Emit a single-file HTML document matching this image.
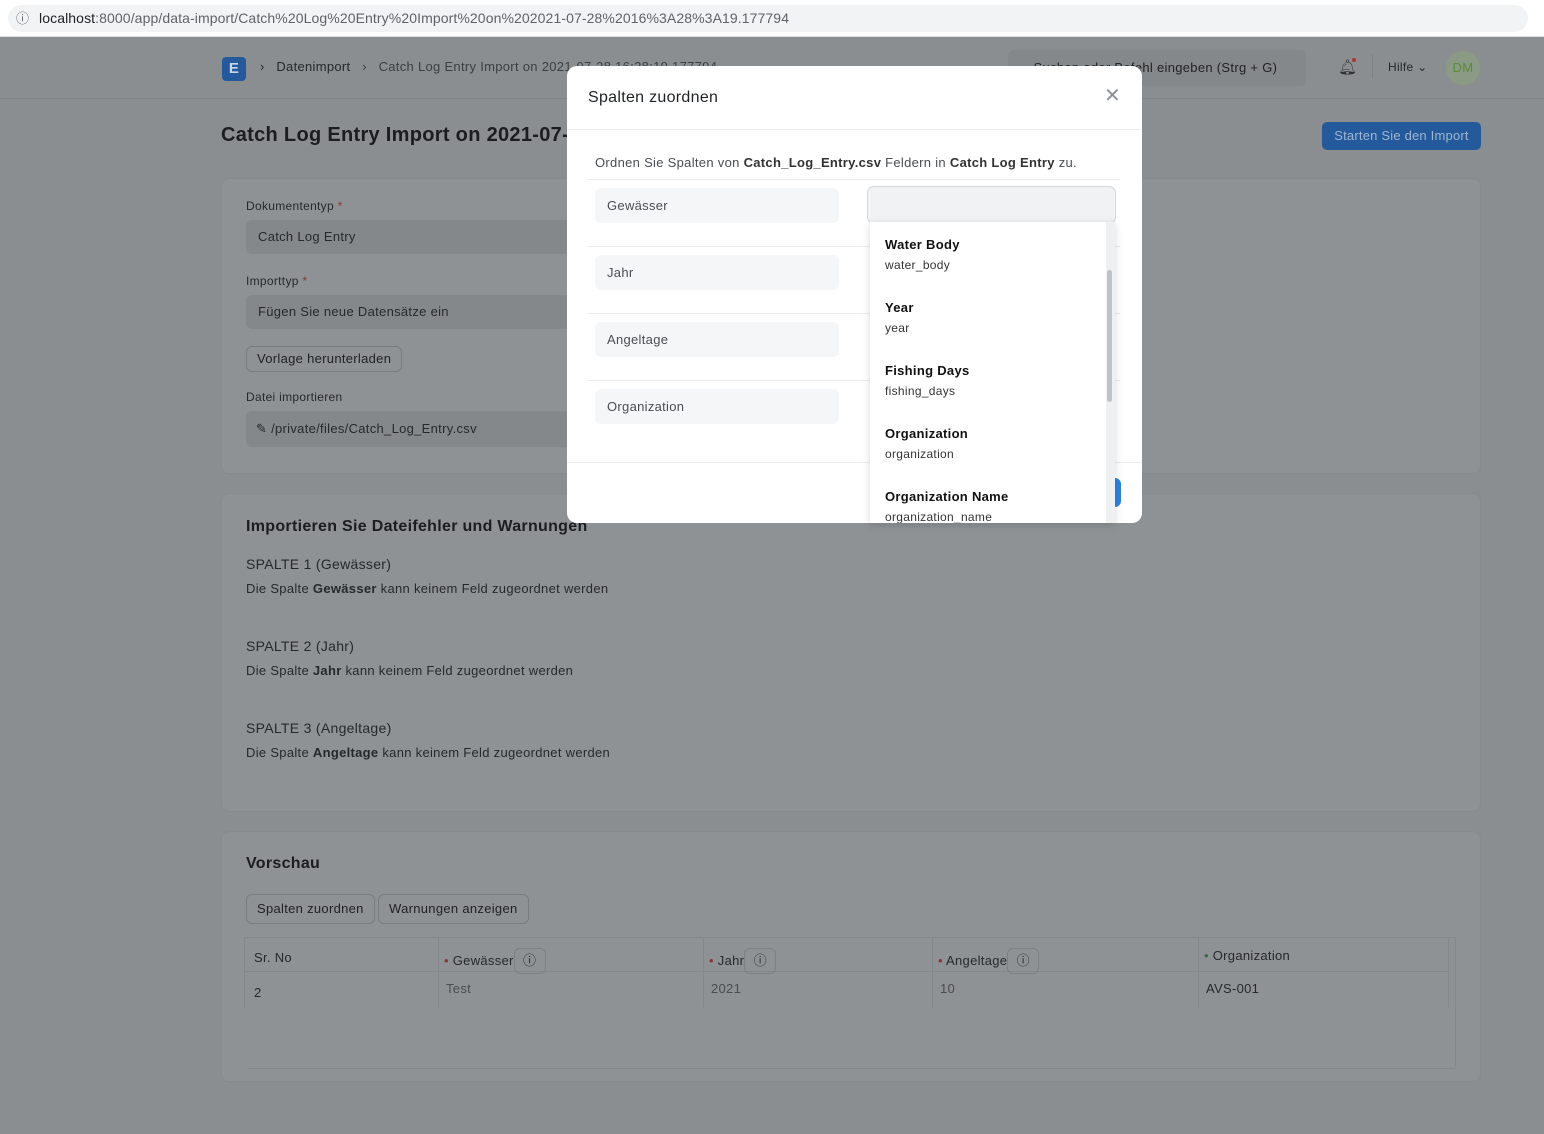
<!DOCTYPE html>
<html><head><meta charset="utf-8">
<style>
*{box-sizing:border-box;margin:0;padding:0}
body{width:1544px;height:1134px;overflow:hidden;font-family:"Liberation Sans",sans-serif;background:#8b8e91;position:relative;color:#1f2224;letter-spacing:0.3px}
.abs{position:absolute}
.chrome{left:0;top:0;width:1544px;height:37px;background:#fff;border-bottom:1px solid #dcdde0;letter-spacing:0.1px}
.url{left:8px;top:5px;width:1520px;height:27px;background:#f1f3f4;border-radius:14px;font-size:14px;line-height:27px;padding-left:31px;color:#202124}
.url .g{color:#5f6368}
.nav{left:0;top:38px;width:1544px;height:61px;border-bottom:1px solid #808386}
.card{background:#8f9295;border:1px solid #868a8d;border-radius:8px}
.t{color:#1b1d1f}
.m{color:#26292b}
.input{background:#85888b;border-radius:6px}
.btn{border:1px solid #7a7d80;border-radius:6px;background:#8f9295;font-size:13px;color:#1e2022;padding:0 10px;height:26px;line-height:24px}
.modal{left:567px;top:66px;width:575px;height:457px;background:#fff;border-radius:10px;overflow:hidden}
.lbl{background:#f5f6f7;border-radius:6px;height:35px;font-size:13px;color:#4a4e52;line-height:35px;padding-left:12px;width:244px}
.hr{height:1px;background:#ebedef}
.dd{left:870px;top:222px;width:245px;height:301px;background:#fff;box-shadow:0 2px 8px rgba(0,0,0,.15);overflow:hidden}
.opt{position:absolute;left:15px;font-size:13px;color:#1f2224}
.opt b{display:block;font-weight:bold;margin-bottom:5px;color:#111}
.opt span{font-size:12px;color:#333}
</style></head><body>
<div class="abs chrome"><div class="abs url"><span style="position:absolute;left:8px;top:0;font-size:13px;color:#5f6368">ⓘ</span>localhost<span class="g">:8000/app/data-import/Catch%20Log%20Entry%20Import%20on%202021-07-28%2016%3A28%3A19.177794</span></div></div>

<div class="abs nav">
 <div class="abs" style="left:222px;top:19px;width:24px;height:24px;background:#245a9c;border-radius:4px;color:#c9d6e6;font-weight:bold;font-size:15px;text-align:center;line-height:24px">E</div>
 <div class="abs m" style="left:260px;top:21px;font-size:13px">›&nbsp;&nbsp; Datenimport &nbsp;&nbsp;<span style="color:#3c3f42">›&nbsp;&nbsp; Catch Log Entry Import on 2021-07-28 16:28:19.177794</span></div>
 <div class="abs" style="left:1008px;top:12px;width:298px;height:36px;background:#85888b;border-radius:6px;font-size:13px;line-height:36px;padding-left:14px;color:#222">⌕ Suchen oder Befehl eingeben (Strg + G)</div>
 <div class="abs" style="left:1338px;top:20px;font-size:15px;color:#333">🔔︎</div>
 <div class="abs" style="left:1352px;top:20px;width:4px;height:4px;border-radius:2px;background:#a33"></div>
 <div class="abs" style="left:1372px;top:16px;width:1px;height:24px;background:#7e8184"></div>
 <div class="abs m" style="left:1388px;top:22px;font-size:12px">Hilfe ⌄</div>
 <div class="abs" style="left:1446px;top:13px;width:34px;height:34px;border-radius:17px;background:#8a9a84;color:#5c8a3a;font-size:13px;text-align:center;line-height:34px">DM</div>
</div>

<div class="abs t" style="left:221px;top:124px;font-size:20px;font-weight:bold">Catch Log Entry Import on 2021-07-28</div>
<div class="abs" style="left:1322px;top:122px;width:159px;height:28px;background:#245a9c;border-radius:5px;color:#9fb6d2;font-size:13px;text-align:center;line-height:28px;letter-spacing:0.2px">Starten Sie den Import</div>

<div class="abs card" style="left:221px;top:178px;width:1260px;height:296px">
 <div class="abs m" style="left:24px;top:20px;font-size:12px">Dokumententyp <span style="color:#8a3535">*</span></div>
 <div class="abs input m" style="left:24px;top:41px;width:400px;height:34px;font-size:13px;line-height:34px;padding-left:12px">Catch Log Entry</div>
 <div class="abs m" style="left:24px;top:95px;font-size:12px">Importtyp <span style="color:#8a3535">*</span></div>
 <div class="abs input m" style="left:24px;top:116px;width:400px;height:34px;font-size:13px;line-height:34px;padding-left:12px">Fügen Sie neue Datensätze ein</div>
 <div class="abs btn" style="left:24px;top:167px">Vorlage herunterladen</div>
 <div class="abs m" style="left:24px;top:211px;font-size:12px">Datei importieren</div>
 <div class="abs input m" style="left:24px;top:232px;width:400px;height:36px;font-size:13px;line-height:36px;padding-left:10px">✎ /private/files/Catch_Log_Entry.csv</div>
</div>

<div class="abs card" style="left:221px;top:493px;width:1260px;height:319px">
 <div class="abs t" style="left:24px;top:24px;font-size:16px;font-weight:bold">Importieren Sie Dateifehler und Warnungen</div>
 <div class="abs m" style="left:24px;top:62px;font-size:14px">SPALTE 1 (Gewässer)</div>
 <div class="abs m" style="left:24px;top:87px;font-size:13px">Die Spalte <b>Gewässer</b> kann keinem Feld zugeordnet werden</div>
 <div class="abs m" style="left:24px;top:144px;font-size:14px">SPALTE 2 (Jahr)</div>
 <div class="abs m" style="left:24px;top:169px;font-size:13px">Die Spalte <b>Jahr</b> kann keinem Feld zugeordnet werden</div>
 <div class="abs m" style="left:24px;top:226px;font-size:14px">SPALTE 3 (Angeltage)</div>
 <div class="abs m" style="left:24px;top:251px;font-size:13px">Die Spalte <b>Angeltage</b> kann keinem Feld zugeordnet werden</div>
</div>

<div class="abs card" style="left:221px;top:831px;width:1260px;height:251px">
 <div class="abs t" style="left:24px;top:23px;font-size:16px;font-weight:bold">Vorschau</div>
 <div class="abs btn" style="left:24px;top:62px;height:30px;line-height:28px">Spalten zuordnen</div>
 <div class="abs btn" style="left:156px;top:62px;height:30px;line-height:28px">Warnungen anzeigen</div>
 <div class="abs" style="left:22px;top:105px;width:1212px;height:1px;background:#85888b"></div>
 <div class="abs" style="left:22px;top:105px;width:1px;height:70px;background:#85888b"></div>
 <div class="abs" style="left:1233px;top:105px;width:1px;height:130px;background:#85888b"></div>
 <div class="abs" style="left:26px;top:236px;width:1207px;height:1px;background:#85888b"></div>
 <div class="abs" style="left:22px;top:139px;width:1204px;height:1px;background:#85888b"></div>
 <div class="abs" style="left:216px;top:105px;width:1px;height:70px;background:#85888b"></div>
 <div class="abs" style="left:481px;top:105px;width:1px;height:70px;background:#85888b"></div>
 <div class="abs" style="left:710px;top:105px;width:1px;height:70px;background:#85888b"></div>
 <div class="abs" style="left:976px;top:105px;width:1px;height:70px;background:#85888b"></div>
 <div class="abs" style="left:1226px;top:105px;width:1px;height:70px;background:#85888b"></div>
 <div class="abs m" style="left:32px;top:118px;font-size:13px">Sr. No</div>
 <div class="abs m" style="left:222px;top:116px;font-size:13px"><span style="color:#8a3535">•</span> Gewässer<span style="display:inline-block;border:1px solid #7e8184;border-radius:6px;width:32px;height:26px;line-height:24px;text-align:center">ⓘ</span></div>
 <div class="abs m" style="left:487px;top:116px;font-size:13px"><span style="color:#8a3535">•</span> Jahr<span style="display:inline-block;border:1px solid #7e8184;border-radius:6px;width:32px;height:26px;line-height:24px;text-align:center">ⓘ</span></div>
 <div class="abs m" style="left:716px;top:116px;font-size:13px"><span style="color:#8a3535">•</span> Angeltage<span style="display:inline-block;border:1px solid #7e8184;border-radius:6px;width:32px;height:26px;line-height:24px;text-align:center">ⓘ</span></div>
 <div class="abs m" style="left:982px;top:116px;font-size:13px"><span style="color:#3c6a45">•</span> Organization</div>
 <div class="abs m" style="left:32px;top:153px;font-size:13px">2</div>
 <div class="abs" style="left:224px;top:149px;font-size:13px;color:#4a4d50">Test</div>
 <div class="abs" style="left:489px;top:149px;font-size:13px;color:#4a4d50">2021</div>
 <div class="abs" style="left:718px;top:149px;font-size:13px;color:#4a4d50">10</div>
 <div class="abs m" style="left:984px;top:149px;font-size:13px">AVS-001</div>
</div>

<div class="abs modal">
 <div class="abs" style="left:21px;top:23px;font-size:16px;color:#1f2224">Spalten zuordnen</div>
 <div class="abs" style="left:537px;top:17px;font-size:20px;color:#8d9196">✕</div>
 <div class="abs hr" style="left:0;top:63px;width:575px"></div>
 <div class="abs" style="left:28px;top:89px;font-size:13px;color:#4a4e52">Ordnen Sie Spalten von <b style="color:#333">Catch_Log_Entry.csv</b> Feldern in <b style="color:#333">Catch Log Entry</b> zu.</div>
 <div class="abs hr" style="left:20px;top:113px;width:533px"></div>
 <div class="abs lbl" style="left:28px;top:122px">Gewässer</div>
 <div class="abs" style="left:300px;top:120px;width:249px;height:38px;background:#f1f2f4;border:1px solid #d3d6da;border-radius:7px"></div>
 <div class="abs hr" style="left:20px;top:180px;width:533px"></div>
 <div class="abs lbl" style="left:28px;top:189px">Jahr</div>
 <div class="abs hr" style="left:20px;top:247px;width:533px"></div>
 <div class="abs lbl" style="left:28px;top:256px">Angeltage</div>
 <div class="abs hr" style="left:20px;top:314px;width:533px"></div>
 <div class="abs lbl" style="left:28px;top:323px">Organization</div>
 <div class="abs hr" style="left:0;top:396px;width:575px"></div>
 <div class="abs" style="left:470px;top:412px;width:84px;height:29px;background:#2b84e3;border-radius:6px;color:#fff;font-size:13px;text-align:center;line-height:29px">Speichern</div>
</div>

<div class="abs dd">
 <div class="opt" style="top:15px"><b>Water Body</b><span>water_body</span></div>
 <div class="opt" style="top:78px"><b>Year</b><span>year</span></div>
 <div class="opt" style="top:141px"><b>Fishing Days</b><span>fishing_days</span></div>
 <div class="opt" style="top:204px"><b>Organization</b><span>organization</span></div>
 <div class="opt" style="top:267px"><b>Organization Name</b><span>organization_name</span></div>
 <div class="abs" style="left:236px;top:0;width:9px;height:301px;background:#eef0f2"></div>
 <div class="abs" style="left:237px;top:48px;width:5px;height:132px;background:#bfc3c8;border-radius:3px"></div>
</div>
</body></html>
